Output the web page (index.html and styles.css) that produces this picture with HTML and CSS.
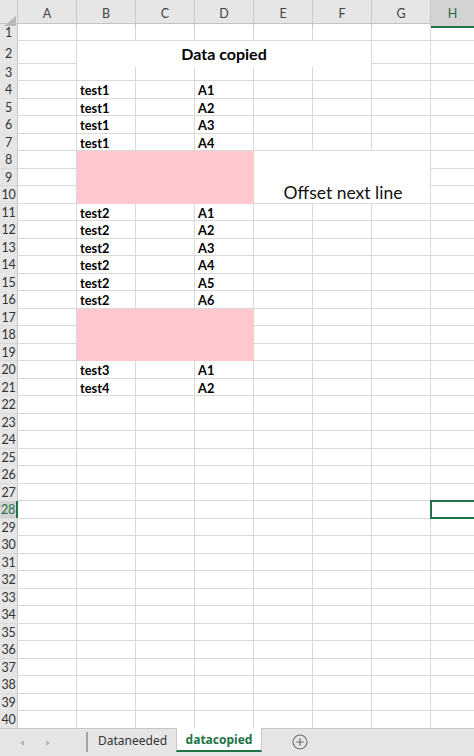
FILE: index.html
```html
<!DOCTYPE html>
<html>
<head>
<meta charset="utf-8">
<link rel="stylesheet" href="styles.css">
</head>
<body>
<div class="app">
  <div class="sheet">
    <div class="colhead">
      <div class="corner"><span class="tri"></span></div>
      <div class="ch">A</div><div class="ch">B</div><div class="ch">C</div><div class="ch">D</div>
      <div class="ch">E</div><div class="ch">F</div><div class="ch">G</div><div class="ch sel-col">H</div>
    </div>
    <div class="row short"><div class="rh">1</div></div>
    <div class="row tall"><div class="rh">2</div><div class="title">Data copied</div></div>
    <div class="row short"><div class="rh">3</div></div>
    <div class="row"><div class="rh">4</div><div class="c cb">test1</div><div class="c cd">A1</div></div>
    <div class="row"><div class="rh">5</div><div class="c cb">test1</div><div class="c cd">A2</div></div>
    <div class="row"><div class="rh">6</div><div class="c cb">test1</div><div class="c cd">A3</div></div>
    <div class="row"><div class="rh">7</div><div class="c cb">test1</div><div class="c cd">A4</div></div>
    <div class="block">
      <div class="rh lined r1">8</div><div class="lined ca r1"></div><div class="lined chh r1"></div>
      <div class="rh lined r2">9</div><div class="lined ca r2"></div><div class="lined chh r2"></div>
      <div class="rh lined r3">10</div><div class="lined ca r3"></div><div class="lined chh r3"></div>
      <div class="pink"></div>
      <div class="note">Offset next line</div>
    </div>
    <div class="row"><div class="rh">11</div><div class="c cb">test2</div><div class="c cd">A1</div></div>
    <div class="row"><div class="rh">12</div><div class="c cb">test2</div><div class="c cd">A2</div></div>
    <div class="row"><div class="rh">13</div><div class="c cb">test2</div><div class="c cd">A3</div></div>
    <div class="row"><div class="rh">14</div><div class="c cb">test2</div><div class="c cd">A4</div></div>
    <div class="row"><div class="rh">15</div><div class="c cb">test2</div><div class="c cd">A5</div></div>
    <div class="row"><div class="rh">16</div><div class="c cb">test2</div><div class="c cd">A6</div></div>
    <div class="block">
      <div class="rh lined r1">17</div><div class="lined ca r1"></div><div class="lined cee r1"></div><div class="lined chh r1"></div>
      <div class="rh lined r2">18</div><div class="lined ca r2"></div><div class="lined cee r2"></div><div class="lined chh r2"></div>
      <div class="rh lined r3">19</div><div class="lined ca r3"></div><div class="lined cee r3"></div><div class="lined chh r3"></div>
      <div class="pink"></div>
    </div>
    <div class="row"><div class="rh">20</div><div class="c cb">test3</div><div class="c cd">A1</div></div>
    <div class="row"><div class="rh">21</div><div class="c cb">test4</div><div class="c cd">A2</div></div>
    <div class="row"><div class="rh">22</div></div>
    <div class="row"><div class="rh">23</div></div>
    <div class="row"><div class="rh">24</div></div>
    <div class="row"><div class="rh">25</div></div>
    <div class="row"><div class="rh">26</div></div>
    <div class="row"><div class="rh">27</div></div>
    <div class="row"><div class="rh sel-row">28</div><div class="selcell"></div></div>
    <div class="row"><div class="rh">29</div></div>
    <div class="row"><div class="rh">30</div></div>
    <div class="row"><div class="rh">31</div></div>
    <div class="row"><div class="rh">32</div></div>
    <div class="row"><div class="rh">33</div></div>
    <div class="row"><div class="rh">34</div></div>
    <div class="row"><div class="rh">35</div></div>
    <div class="row"><div class="rh">36</div></div>
    <div class="row"><div class="rh">37</div></div>
    <div class="row"><div class="rh">38</div></div>
    <div class="row"><div class="rh">39</div></div>
    <div class="row"><div class="rh">40</div></div>
  </div>
  <div class="tabs">
    <div class="nav">
      <span class="arr-l"></span>
      <span class="arr-r"></span>
    </div>
    <div class="sep"></div>
    <div class="tab">Dataneeded</div>
    <div class="tab active">datacopied</div>
    <div class="add">
      <svg width="16" height="16" viewBox="0 0 16 16">
        <circle cx="8" cy="8" r="7" fill="none" stroke="#6f6f6f" stroke-width="1.1"/>
        <path d="M8 4.2v7.6M4.2 8h7.6" stroke="#6f6f6f" stroke-width="1.2"/>
      </svg>
    </div>
  </div>
</div>
</body>
</html>
```
FILE: styles.css
```css
html, body {
  margin: 0;
  padding: 0;
  background: #ffffff;
}
body {
  width: 474px;
  height: 756px;
  overflow: hidden;
}
.app {
  width: 474px;
  height: 756px;
  display: flex;
  flex-direction: column;
  font-family: "Lato", "Liberation Sans", sans-serif;
}
.sheet {
  height: 728px;
  overflow: hidden;
  background-color: #ffffff;
  background-image: repeating-linear-gradient(90deg, transparent 0 58px, #d9d9d9 58px 59px);
  background-position: 18px 0;
}
.colhead, .row, .block {
  display: grid;
  grid-template-columns: 18px repeat(7, 59px) 43px;
}
.colhead {
  height: 24px;
  box-sizing: border-box;
  background: #e6e6e6;
  border-bottom: 1px solid #c4c4c4;
}
.corner {
  position: relative;
  border-right: 1px solid #c8c8c8;
}
.tri {
  position: absolute;
  right: 1px;
  bottom: 1px;
  width: 12px;
  height: 10px;
  background: #b9b9b9;
  clip-path: polygon(100% 0, 100% 100%, 0 100%);
}
.ch {
  border-right: 1px solid #c8c8c8;
  font-size: 12.5px;
  color: #444;
  text-align: center;
  line-height: 24px;
  padding-top: 2px;
  box-sizing: border-box;
}
.ch.sel-col {
  border-right: none;
  background: #d3d3d3;
  color: #2a6b47;
  border-bottom: 2px solid #217346;
  margin-bottom: -1px;
}
.row {
  height: 17.5px;
  box-sizing: border-box;
  border-bottom: 1px solid #d9d9d9;
}
.row.short { height: 17px; }
.row.tall { height: 23px; }
.block {
  grid-template-rows: repeat(3, 17.5px);
}
.rh {
  grid-column: 1;
  background: #e6e6e6;
  border-right: 1px solid #c8c8c8;
  font-size: 12.5px;
  color: #333;
  text-align: center;
  line-height: 17px;
  letter-spacing: -0.2px;
}
.row.tall .rh { line-height: 26px; }
.rh.sel-row {
  background: #d3d3d3;
  color: #217346;
  border-right: 2px solid #217346;
}
.lined {
  box-sizing: border-box;
  border-bottom: 1px solid #d9d9d9;
}
.block .rh { box-sizing: border-box; }
.r1 { grid-row: 1; }
.r2 { grid-row: 2; }
.r3 { grid-row: 3; }
.ca { grid-column: 2; }
.cee { grid-column: 6 / 9; background-image: repeating-linear-gradient(90deg, transparent 0 58px, #d9d9d9 58px 59px); }
.chh { grid-column: 9; }
.c {
  font-weight: 700;
  font-size: 12.8px;
  color: #000;
  padding-left: 3px;
  line-height: 18px;
  white-space: nowrap;
}
.cb { grid-column: 3; }
.cd { grid-column: 5; }
.title {
  grid-column: 3 / 8;
  margin-right: 1px;
  background: #ffffff;
  text-align: center;
  font-weight: 700;
  font-size: 16px;
  line-height: 23px;
  padding-top: 1px;
  box-sizing: border-box;
  color: #000;
}
.pink {
  grid-column: 3 / 6;
  grid-row: 1 / 4;
  background: #ffc7ce;
}
.note {
  grid-column: 6 / 9;
  grid-row: 1 / 4;
  margin-right: 1px;
  background: #ffffff;
  border-bottom: 1px solid #d9d9d9;
  box-sizing: border-box;
  display: flex;
  align-items: flex-end;
  justify-content: center;
  font-size: 17.5px;
  color: #111;
  line-height: 21px;
  padding-left: 2px;
}
.selcell {
  grid-column: 9;
  border: 2px solid #217346;
  border-right: none;
  margin: -1px 0 -1px -1px;
}
.tabs {
  height: 28px;
  box-sizing: border-box;
  display: flex;
  align-items: flex-start;
  background: #e6e6e6;
  border-top: 1px solid #c6c6c6;
  font-family: "Noto Sans", "Open Sans", sans-serif;
  font-size: 12px;
}
.nav {
  width: 86px;
  height: 27px;
  display: flex;
  align-items: center;
  padding-left: 20px;
  box-sizing: border-box;
  gap: 22px;
}
.arr-l {
  width: 0;
  height: 0;
  border-top: 3.5px solid transparent;
  border-bottom: 3.5px solid transparent;
  border-right: 4px solid #b8b8b8;
}
.arr-r {
  width: 0;
  height: 0;
  border-top: 3.5px solid transparent;
  border-bottom: 3.5px solid transparent;
  border-left: 4px solid #b8b8b8;
}
.sep {
  width: 2px;
  height: 20px;
  margin-top: 3px;
  background: #a3a3a3;
}
.tab {
  height: 22px;
  padding: 0 10px 0 10px;
  line-height: 24px;
  color: #333;
  box-sizing: border-box;
  width: 88px;
  white-space: nowrap;
}
.tab.active {
  width: 86px;
  padding: 0;
  text-align: center;
  background: #ffffff;
  color: #217346;
  font-weight: 700;
  border-left: 1px solid #c6c6c6;
  border-right: 1px solid #c6c6c6;
  border-bottom: 2px solid #217346;
  margin-top: -1px;
  height: 24px;
  line-height: 24px;
}
.add {
  margin-left: 30px;
  margin-top: 5px;
  height: 16px;
}
.add svg { display: block; }
```
